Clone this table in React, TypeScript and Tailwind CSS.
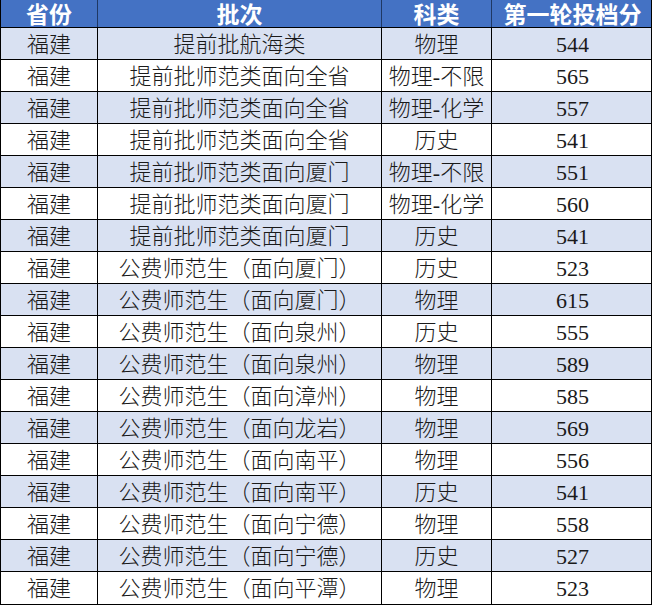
const rows: [string, string, string][] = [
  ["提前批航海类", "物理", "544"],
  ["提前批师范类面向全省", "物理-不限", "565"],
  ["提前批师范类面向全省", "物理-化学", "557"],
  ["提前批师范类面向全省", "历史", "541"],
  ["提前批师范类面向厦门", "物理-不限", "551"],
  ["提前批师范类面向厦门", "物理-化学", "560"],
  ["提前批师范类面向厦门", "历史", "541"],
  ["公费师范生（面向厦门）", "历史", "523"],
  ["公费师范生（面向厦门）", "物理", "615"],
  ["公费师范生（面向泉州）", "历史", "555"],
  ["公费师范生（面向泉州）", "物理", "589"],
  ["公费师范生（面向漳州）", "物理", "585"],
  ["公费师范生（面向龙岩）", "物理", "569"],
  ["公费师范生（面向南平）", "物理", "556"],
  ["公费师范生（面向南平）", "历史", "541"],
  ["公费师范生（面向宁德）", "物理", "558"],
  ["公费师范生（面向宁德）", "历史", "527"],
  ["公费师范生（面向平潭）", "物理", "523"],
];

const cols = "grid grid-cols-[97px_284px_110px_161px]";

export default function App() {
  return (
    <div className="w-[654px] h-[605px] bg-white">
      <div className="w-[652px] border-l border-r border-b border-black">
        {/* 表头 */}
        <div
          className={`${cols} h-[28px] bg-[#4472c4] text-white font-bold text-[23px] leading-none border-b border-black`}
          style={{ fontFamily: '"Noto Sans CJK SC", sans-serif' }}
        >
          <div className="flex items-center justify-center border-r border-[#1f3864]">省份</div>
          <div className="flex items-center justify-center border-r border-[#1f3864]">批次</div>
          <div className="flex items-center justify-center border-r border-[#1f3864]">科类</div>
          <div className="flex items-center justify-center">第一轮投档分</div>
        </div>
        {rows.map(([batch, subject, score], i) => (
          <div
            key={i}
            className={`${cols} h-[32px] text-[22px] leading-none text-[#1a1a1a] ${
              i % 2 === 0 ? "bg-[#d9e1f2]" : "bg-white"
            } ${i < rows.length - 1 ? "border-b border-black" : ""}`}
            style={{ fontFamily: '"Liberation Serif", "Noto Sans CJK SC", serif' }}
          >
            <div className="flex items-center justify-center pt-[2px] border-r border-black font-light">福建</div>
            <div className="flex items-center justify-center pt-[2px] border-r border-black font-light">{batch}</div>
            <div className="flex items-center justify-center pt-[2px] border-r border-black font-light">{subject}</div>
            <div className="flex items-center justify-center pt-[2px]">{score}</div>
          </div>
        ))}
      </div>
    </div>
  );
}
